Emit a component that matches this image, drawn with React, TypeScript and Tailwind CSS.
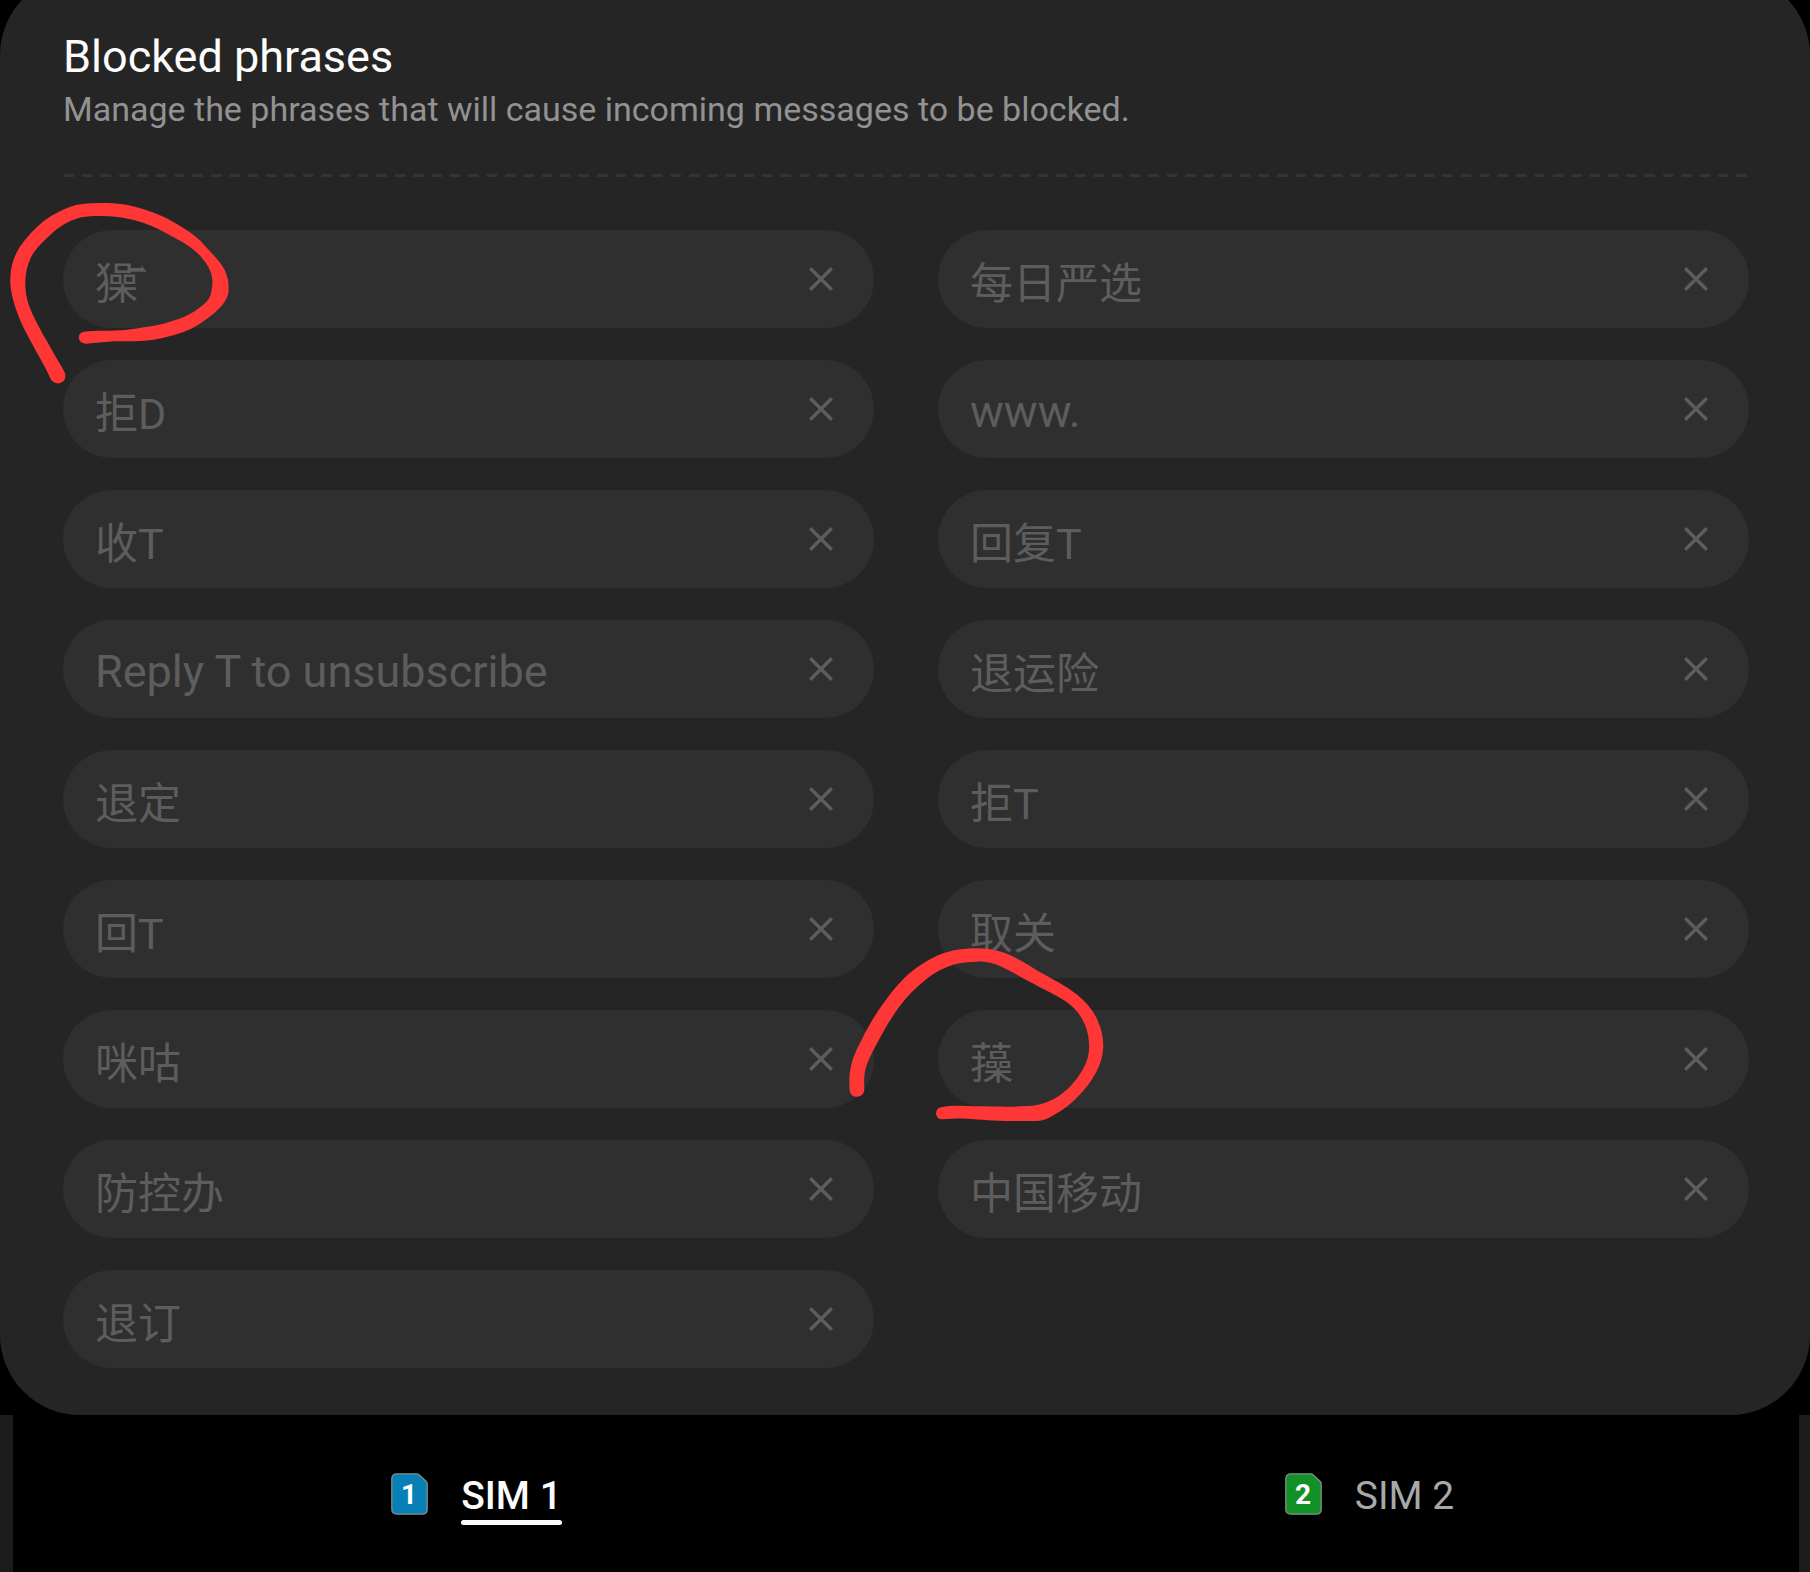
interface Phrase {
  text: string;
  latin?: boolean;
  mark?: 'loop' | 'arc';
}

const phrases: Phrase[] = [
  { text: '\u{24896}', mark: 'loop' },
  { text: '每日严选' },
  { text: '拒D' },
  { text: 'www.', latin: true },
  { text: '收T' },
  { text: '回复T' },
  { text: 'Reply T to unsubscribe', latin: true },
  { text: '退运险' },
  { text: '退定' },
  { text: '拒T' },
  { text: '回T' },
  { text: '取关' },
  { text: '咪咕' },
  { text: '\u{27088}', mark: 'arc' },
  { text: '防控办' },
  { text: '中国移动' },
  { text: '退订' },
];

const sims = [
  { id: 1, label: 'SIM 1', fill: '#0880b6', active: true },
  { id: 2, label: 'SIM 2', fill: '#149028', active: false },
];

// Hand-drawn marker loop around the first phrase, plus the small harpoon over its character
function LoopMark() {
  return (
    <svg
      className="pointer-events-none absolute -top-[40px] -left-[63px] z-10 h-[200px] w-[300px]"
      viewBox="0 0 900 600"
      aria-hidden="true"
    >
      <path d="M390 234H424V226L440 245H390Z" fill="#5d5d5d" />
      <path
        fill="#ff3636"
        d="M152 567C142 543 124 512 103 474C83 437 62 399 51 366C37 328 29 290 31 262C32 230 42 198 59 171C78 144 103 117 130 94C160 72 196 53 228 45C262 37 330 37 370 43C410 50 462 66 500 85C536 104 573 127 602 153C622 176 649 202 665 225C680 246 687 270 686 297C686 316 678 333 662 351C637 377 607 398 577 415C540 433 500 442 462 449C425 454 385 454 342 454L256 461C231 459 230 428 252 425C290 420 330 424 364 421C410 415 455 409 490 401C530 391 568 377 596 355C617 339 631 326 634 305C638 287 639 270 634 253C628 231 615 214 599 196C582 178 560 162 535 149C505 133 477 116 445 104C405 89 362 80 323 79C290 77 262 78 236 84C207 92 178 109 155 131C128 155 105 177 92 204C80 229 75 258 76 289C77 318 84 344 97 371C117 415 141 452 162 491C176 516 187 530 195 550C203 582 164 590 152 567Z"
      />
    </svg>
  );
}

function ArcMark() {
  return (
    <svg
      className="pointer-events-none absolute -top-[90px] -left-[117px] z-10 h-[220px] w-[320px]"
      viewBox="0 0 960 660"
      aria-hidden="true"
    >
      <path
        fill="#ff3636"
        d="M86 512C84 485 84 459 92 430C99 402 111 380 125 353C142 319 160 288 183 256C204 226 226 197 251 173C280 145 311 125 346 108C379 93 417 86 456 85C493 84 524 89 552 99C587 112 621 134 655 155C692 176 734 196 767 223C795 246 816 271 829 299C841 326 847 350 847 378C846 407 839 431 826 456C811 485 789 512 766 535C742 559 712 579 687 592C673 600 661 603 645 603H570C520 602 479 599 435 596C410 595 385 597 362 598C340 596 340 565 360 562C395 555 433 558 468 559C515 559 562 561 600 559C624 558 647 558 668 550C690 543 711 531 730 515C754 495 774 469 788 443C801 420 806 397 804 370C803 343 796 319 783 296C770 273 752 256 729 241C699 222 665 207 635 190C603 173 570 153 537 138C516 129 492 124 468 125C443 126 422 127 397 134C362 145 330 163 305 187C279 209 256 232 236 259C212 292 192 325 174 359C160 384 147 408 137 435C130 455 128 479 130 505C132 536 91 538 86 512Z"
      />
    </svg>
  );
}

function SimIcon({ id, fill }: { id: number; fill: string }) {
  return (
    <svg className="h-[42px] w-[37px]" viewBox="0 0 37 42" aria-hidden="true">
      <path
        d="M6 .8H25.500Q27 .8 28 1.800L35.200 8.500Q36.200 9.500 36.200 11V36Q36.200 41.200 31 41.200H6Q.8 41.200 .8 36V6Q.8 .8 6 .8Z"
        fill={fill}
        stroke="#7f8f8c"
        strokeWidth="1.300"
      />
      <text x="18" y="31" textAnchor="middle" fill="#fff" fontFamily="Roboto, sans-serif" fontSize="28" fontWeight="700">
        {id}
      </text>
    </svg>
  );
}

export default function App() {
  return (
    <div className="min-h-screen overflow-hidden bg-black [font-family:Roboto,'Noto_Sans_CJK_SC',sans-serif]">
      <main className="-mt-[25px] rounded-[80px] bg-[#252525] pt-[55px] pr-[61px] pb-[47px] pl-[63px]">
        <h1 className="text-[45px] leading-[54px] text-[#fcfcfc]">Blocked phrases</h1>
        <p className="text-[34px] leading-[50px] text-[#929292]">
          Manage the phrases that will cause incoming messages to be blocked.
        </p>

        <svg className="mt-[40px] h-[3px] w-full" aria-hidden="true">
          <line x1="1" y1="1.500" x2="100%" y2="1.500" stroke="#343434" strokeWidth="3" strokeDasharray="10.400 7.980" />
        </svg>

        <ul className="mt-[53px] grid grid-cols-2 gap-x-16 gap-y-8">
          {phrases.map((phrase) => (
            <li
              key={phrase.text}
              className="relative flex h-[98px] items-center justify-between rounded-full bg-[#2f2f2f] pr-[35px] pl-8"
            >
              <span
                className={
                  phrase.latin
                    ? 'pt-1.5 text-[45px] leading-[56px] text-[#5d5d5d]'
                    : 'pt-2.5 text-[43px] leading-[56px] text-[#5d5d5d]'
                }
              >
                {phrase.text}
              </span>
              <button type="button" aria-label={`Remove ${phrase.text}`} className="p-1.5 text-[#5d5d5d]">
                <svg className="h-6 w-6" viewBox="0 0 24 24" fill="none" stroke="currentColor" strokeWidth="3.400">
                  <path d="M1.200 1.200L22.800 22.800M22.800 1.200L1.200 22.800" />
                </svg>
              </button>
              {phrase.mark === 'loop' && <LoopMark />}
              {phrase.mark === 'arc' && <ArcMark />}
            </li>
          ))}
        </ul>
      </main>

      <nav className="grid h-[157px] grid-cols-2 border-r-[11px] border-l-[13px] border-[#1c1c1c]">
        {sims.map((sim) => (
          <button key={sim.id} type="button" className="flex items-start justify-center gap-[33px] pt-[57px] pl-[34px]">
            <span className="pt-px">
              <SimIcon id={sim.id} fill={sim.fill} />
            </span>
            <span
              className={
                sim.active
                  ? 'text-[39px] leading-[48px] font-medium text-[#fcfcfc]'
                  : 'text-[39px] leading-[48px] text-[#a8a8a8]'
              }
            >
              {sim.label}
              {sim.active && <span className="block h-[5px] rounded-full bg-[#fcfcfc]" />}
            </span>
          </button>
        ))}
      </nav>
    </div>
  );
}
